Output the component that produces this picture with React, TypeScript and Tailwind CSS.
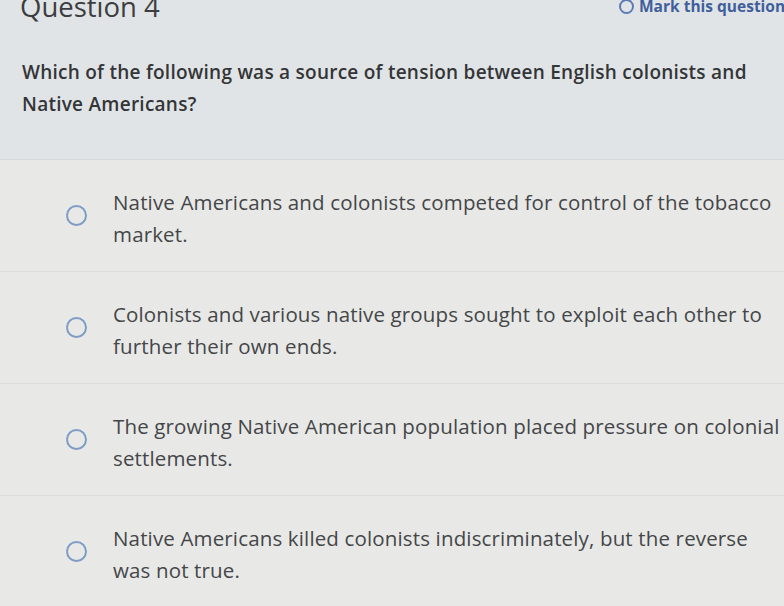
import React from 'react';

const options = [
  ['Native Americans and colonists competed for control of the tobacco', 'market.'],
  ['Colonists and various native groups sought to exploit each other to', 'further their own ends.'],
  ['The growing Native American population placed pressure on colonial', 'settlements.'],
  ['Native Americans killed colonists indiscriminately, but the reverse', 'was not true.'],
];

const Radio: React.FC = () => (
  <span className="block w-[21px] h-[21px] rounded-full border-2 border-[#7f9dc4] shrink-0" />
);

export default function App() {
  return (
    <div className="w-[784px] h-[606px] overflow-hidden bg-[#e8e9e7] font-['Open_Sans','Liberation_Sans',sans-serif]">
      <div className="bg-[#e1e4e6] h-[160px] border-b border-[#d6d8d8]">
        <div className="flex justify-between items-start h-[22px]">
          <h1 className="pl-[20px] mt-[-8px] text-[27.5px] leading-[30px] font-medium text-[#3b3d3f]">
            Question 4
          </h1>
          <button className="flex items-center gap-[5px] mt-[-5px] whitespace-nowrap w-[165px] overflow-hidden text-[15.5px] font-bold text-[#3f5f9c]">
            <span className="block w-[15px] h-[15px] rounded-full border-2 border-[#5b7bb5] shrink-0" />
            Mark this question
          </button>
        </div>
        <p className="pl-[22px] pt-[34px] text-[19px] leading-[32px] tracking-[0.25px] font-semibold text-[#333537] w-[800px]">
          Which of the following was a source of tension between English colonists and
          <br />
          Native Americans?
        </p>
      </div>
      <ul>
        {options.map((lines, i) => (
          <li key={i} className="h-[112px] border-b border-[#dcdcda] flex items-center pt-[5px]">
            <div className="w-[113px] pl-[66px] mt-[-6px]">
              <Radio />
            </div>
            <p className="text-[20.5px] leading-[32px] tracking-[0.15px] text-[#444648] whitespace-nowrap">
              {lines[0]}
              <br />
              {lines[1]}
            </p>
          </li>
        ))}
      </ul>
    </div>
  );
}
